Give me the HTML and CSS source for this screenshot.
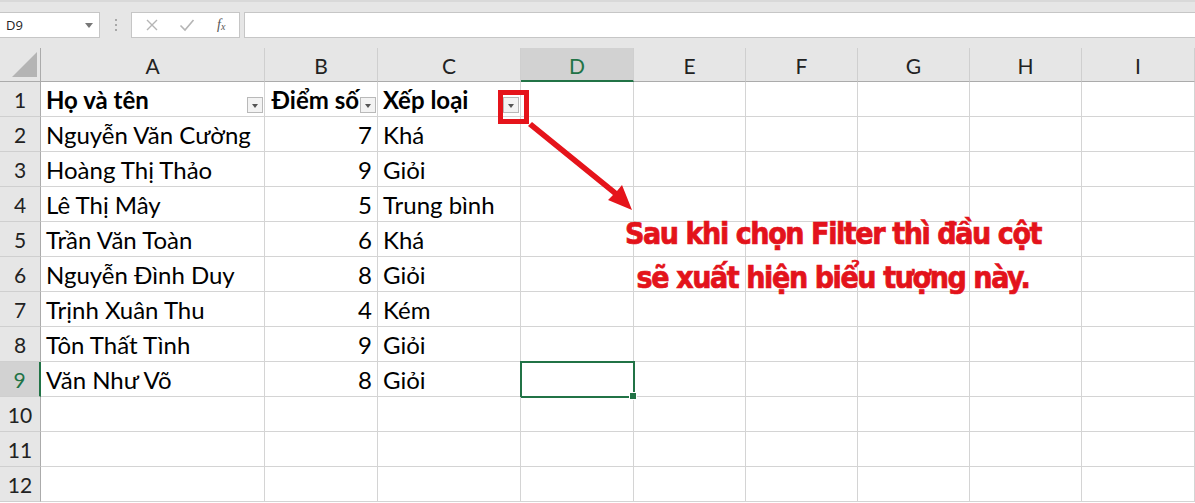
FILE: index.html
```html
<!DOCTYPE html>
<html lang="vi">
<head>
<meta charset="utf-8">
<title>Excel Filter</title>
<link rel="stylesheet" href="styles.css">
</head>
<body>
<div class="app">
  <div class="fbar">
    <div class="namebox"><span>D9</span><span class="caret"></span></div>
    <div class="dots"><i></i><i></i><i></i></div>
    <div class="fbtns">
      <svg class="ico" width="14" height="14" viewBox="0 0 14 14"><path d="M2 2 L12 12 M12 2 L2 12" stroke="#b5b5b5" stroke-width="1.4" fill="none"/></svg>
      <svg class="ico" width="16" height="14" viewBox="0 0 16 14"><path d="M1.5 7.5 L6 12 L14.5 2" stroke="#b5b5b5" stroke-width="1.6" fill="none"/></svg>
      <span class="fx">f<sub>x</sub></span>
    </div>
    <div class="finput"></div>
  </div>

  <div class="sheet">
    <div class="corner"><span class="tri"></span></div>
    <div class="ch">A</div><div class="ch">B</div><div class="ch">C</div><div class="ch sel">D</div><div class="ch">E</div><div class="ch">F</div><div class="ch">G</div><div class="ch">H</div><div class="ch">I</div>

    <div class="rh">1</div>
    <div class="c b hdr"><span>Họ và tên</span><span class="fbtn"></span></div>
    <div class="c b hdr r"><span>Điểm số</span><span class="fbtn"></span></div>
    <div class="c b hdr"><span>Xếp loại</span><span class="fbtn"></span></div>
    <div class="c"></div><div class="c"></div><div class="c"></div><div class="c"></div><div class="c"></div><div class="c"></div>

    <div class="rh">2</div><div class="c">Nguyễn Văn Cường</div><div class="c r">7</div><div class="c">Khá</div>
    <div class="c"></div><div class="c"></div><div class="c"></div><div class="c"></div><div class="c"></div><div class="c"></div>

    <div class="rh">3</div><div class="c">Hoàng Thị Thảo</div><div class="c r">9</div><div class="c">Giỏi</div>
    <div class="c"></div><div class="c"></div><div class="c"></div><div class="c"></div><div class="c"></div><div class="c"></div>

    <div class="rh">4</div><div class="c">Lê Thị Mây</div><div class="c r">5</div><div class="c">Trung bình</div>
    <div class="c"></div><div class="c"></div><div class="c"></div><div class="c"></div><div class="c"></div><div class="c"></div>

    <div class="rh">5</div><div class="c">Trần Văn Toàn</div><div class="c r">6</div><div class="c">Khá</div>
    <div class="c"></div><div class="c"></div><div class="c"></div><div class="c"></div><div class="c"></div><div class="c"></div>

    <div class="rh">6</div><div class="c">Nguyễn Đình Duy</div><div class="c r">8</div><div class="c">Giỏi</div>
    <div class="c"></div><div class="c"></div><div class="c"></div><div class="c"></div><div class="c"></div><div class="c"></div>

    <div class="rh">7</div><div class="c">Trịnh Xuân Thu</div><div class="c r">4</div><div class="c">Kém</div>
    <div class="c"></div><div class="c"></div><div class="c"></div><div class="c"></div><div class="c"></div><div class="c"></div>

    <div class="rh">8</div><div class="c">Tôn Thất Tình</div><div class="c r">9</div><div class="c">Giỏi</div>
    <div class="c"></div><div class="c"></div><div class="c"></div><div class="c"></div><div class="c"></div><div class="c"></div>

    <div class="rh sel">9</div><div class="c">Văn Như Võ</div><div class="c r">8</div><div class="c">Giỏi</div>
    <div class="c active"></div><div class="c"></div><div class="c"></div><div class="c"></div><div class="c"></div><div class="c"></div>

    <div class="rh">10</div><div class="c"></div><div class="c"></div><div class="c"></div>
    <div class="c"></div><div class="c"></div><div class="c"></div><div class="c"></div><div class="c"></div><div class="c"></div>

    <div class="rh">11</div><div class="c"></div><div class="c"></div><div class="c"></div>
    <div class="c"></div><div class="c"></div><div class="c"></div><div class="c"></div><div class="c"></div><div class="c"></div>

    <div class="rh">12</div><div class="c"></div><div class="c"></div><div class="c"></div>
    <div class="c"></div><div class="c"></div><div class="c"></div><div class="c"></div><div class="c"></div><div class="c"></div>
  </div>

  <div class="redbox"></div>
  <svg class="arrow" width="120" height="100" viewBox="0 0 120 100">
    <polygon points="2,3 6,-1 91,68 96,62 106,87 82,77 87,72" fill="#e5141b" transform="translate(0,2)"/>
  </svg>
  <div class="note">Sau khi chọn Filter thì đầu cột<br>sẽ xuất hiện biểu tượng này.</div>
</div>
</body>
</html>
```
FILE: styles.css
```css
* { box-sizing: border-box; }
html, body { margin: 0; padding: 0; background: #fff; }
body { width: 1195px; height: 503px; overflow: hidden; font-family: Lato, "Open Sans", sans-serif; }
.app { position: relative; width: 1195px; height: 503px; }

.fbar {
  height: 48px;
  background: #e6e6e6;
  border-top: 2px solid #d9d9d9;
  display: flex;
  align-items: flex-start;
  padding-top: 10px;
}
.namebox {
  width: 100px; height: 26px;
  background: #fff;
  border: 1px solid #c6c6c6;
  border-left: none;
  display: flex; align-items: center; justify-content: space-between;
  padding: 0 6px 0 6px;
  font-family: "Open Sans", sans-serif;
  font-size: 13px; color: #222;
}
.caret {
  width: 0; height: 0;
  border-left: 4px solid transparent; border-right: 4px solid transparent;
  border-top: 5px solid #777;
}
.dots { width: 31px; height: 26px; display: flex; flex-direction: column; align-items: center; justify-content: center; gap: 3px; }
.dots i { display: block; width: 2px; height: 2px; background: #a8a8a8; }
.fbtns {
  width: 109px; height: 26px;
  background: #fff;
  border: 1px solid #c6c6c6;
  display: flex; align-items: center;
  padding-left: 13px; gap: 20px;
}
.fx { font-family: "Liberation Serif", serif; font-style: italic; font-size: 14px; color: #555; margin-left: 2px; }
.fx sub { font-size: 10px; vertical-align: -1px; }
.finput {
  margin-left: 4px;
  flex: 1; height: 26px;
  background: #fff;
  border: 1px solid #c6c6c6;
  border-right: none;
}

.sheet {
  display: grid;
  grid-template-columns: 41px 224px 113px 143px 113px 112px 112px 112px 112px 113px;
  grid-template-rows: 34px repeat(12, 35px);
}
.corner {
  background: #e6e6e6;
  border-right: 1px solid #ababab;
  border-bottom: 1px solid #ababab;
  position: relative;
}
.tri {
  position: absolute; right: 3px; bottom: 4px;
  width: 0; height: 0;
  border-left: 25px solid transparent;
  border-bottom: 25px solid #b4b4b4;
}
.ch {
  background: #e6e6e6;
  border-bottom: 1px solid #ababab;
  border-right: 1px solid #cfcfcf;
  display: flex; align-items: center; justify-content: center;
  font-size: 21px; color: #222;
  padding-top: 2px;
}
.ch.sel { background: #d2d2d2; color: #217346; border-bottom: 2px solid #217346; padding-top: 3px; }
.rh {
  background: #e6e6e6;
  border-right: 1px solid #ababab;
  border-bottom: 1px solid #cfcfcf;
  display: flex; align-items: center; justify-content: center;
  font-size: 21px; color: #222;
}
.rh.sel { background: #d2d2d2; color: #217346; border-right: 2px solid #217346; }
.c {
  border-right: 1px solid #d4d4d4;
  border-bottom: 1px solid #d4d4d4;
  display: flex; align-items: center;
  padding: 0 5px;
  font-size: 24px; color: #000;
  white-space: nowrap;
  position: relative;
}
.c.r { justify-content: flex-end; }
.c.b { font-weight: bold; }
.c.hdr { padding-right: 1px; }
.c.hdr:not(.r) span:first-child { margin-right: auto; }
.c.hdr.r span:first-child { margin-right: 1px; }
.fbtn {
  align-self: flex-end;
  flex: none;
  margin-bottom: 3px;
  width: 16px; height: 16px;
  border: 1px solid #b9b9b9;
  background: #f3f3f3;
  position: relative;
}
.fbtn::after {
  content: "";
  position: absolute; left: 4px; top: 6px;
  border-left: 3.5px solid transparent; border-right: 3.5px solid transparent;
  border-top: 4px solid #555;
}
.c.active { outline: 2px solid #217346; outline-offset: -1px; }
.c.active::after {
  content: "";
  position: absolute; right: -4px; bottom: -4px;
  width: 6px; height: 6px;
  background: #217346;
  border: 1px solid #fff;
  z-index: 2;
}

.redbox {
  position: absolute; left: 498px; top: 90px;
  width: 31px; height: 34px;
  border: 5px solid #e5141b;
}
.arrow { position: absolute; left: 526px; top: 121px; overflow: visible; }
.note {
  position: absolute; left: 600px; top: 212px;
  width: 466px;
  text-align: center;
  font-family: "DejaVu Sans Condensed", "Liberation Sans Narrow", sans-serif;
  font-weight: bold;
  font-size: 30px; line-height: 44px;
  letter-spacing: -1.4px;
  color: #e3131b;
  -webkit-text-stroke: 0.7px #e3131b;
}
```
